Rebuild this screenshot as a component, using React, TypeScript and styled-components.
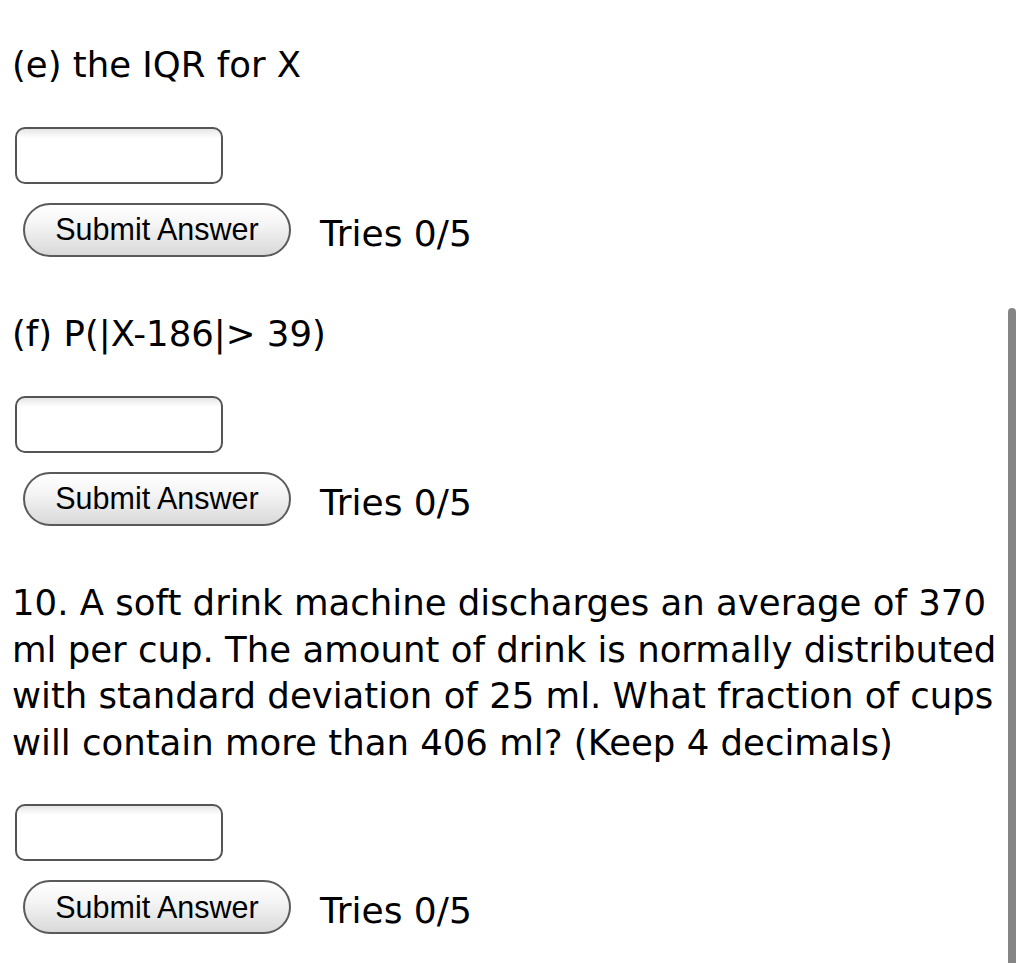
import React from "react";
import styled, { createGlobalStyle } from "styled-components";

const Global = createGlobalStyle`
  html, body { margin: 0; padding: 0; background: #ffffff; }
  body { font-family: "DejaVu Sans", Verdana, sans-serif; color: #000; }
`;

const Page = styled.div`
  padding: 42px 10px 0 12px;
  display: flex;
  flex-direction: column;
`;

const Question = styled.section`
  display: flex;
  flex-direction: column;
  margin-bottom: 54px;
`;

const Prompt = styled.p`
  margin: 0;
  font-size: 35.5px;
  line-height: 46.5px;
`;

const AnswerInput = styled.input`
  box-sizing: border-box;
  margin: 38px 0 0 3px;
  width: 208px;
  height: 57px;
  border: 2px solid #555555;
  border-radius: 10px;
  background: linear-gradient(#e6e6e6 0px, #ffffff 9px, #ffffff 100%);
  outline: none;
  font-size: 28px;
  padding: 0 10px;
`;

const ActionRow = styled.div`
  display: flex;
  align-items: center;
  gap: 29px;
  margin: 19px 0 0 11px;
`;

const SubmitButton = styled.button`
  box-sizing: border-box;
  width: 268px;
  height: 54px;
  border: 2px solid #5a5a5a;
  border-radius: 27px;
  background: linear-gradient(#ffffff 0%, #f4f4f4 40%, #d9d9d9 100%);
  font-family: "Liberation Sans", Arial, sans-serif;
  font-size: 30.5px;
  color: #000;
  padding: 0;
`;

const Tries = styled.span`
  font-size: 36px;
  line-height: 46.5px;
  margin-top: 8px;
`;

const Scrollbar = styled.div`
  position: fixed;
  top: 308px;
  bottom: 0;
  left: 1008px;
  width: 8px;
  border-radius: 4px 4px 0 0;
  background: #858585;
`;

const questions = [
  "(e) the IQR for X",
  "(f) P(|X-186|> 39)",
  "10. A soft drink machine discharges an average of 370 ml per cup. The amount of drink is normally distributed with standard deviation of 25 ml. What fraction of cups will contain more than 406 ml? (Keep 4 decimals)",
];

export default function App() {
  return (
    <>
      <Global />
      <Page>
        {questions.map((q) => (
          <Question key={q}>
            <Prompt>{q}</Prompt>
            <AnswerInput type="text" />
            <ActionRow>
              <SubmitButton type="button">Submit Answer</SubmitButton>
              <Tries>Tries 0/5</Tries>
            </ActionRow>
          </Question>
        ))}
      </Page>
      <Scrollbar />
    </>
  );
}
